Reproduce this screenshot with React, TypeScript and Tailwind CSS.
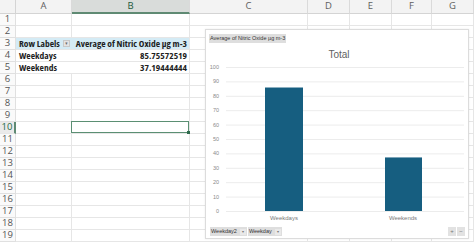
import React from 'react';

const cols = [
  { key: 'A', w: 56 },
  { key: 'B', w: 118 },
  { key: 'C', w: 118 },
  { key: 'D', w: 42 },
  { key: 'E', w: 42 },
  { key: 'F', w: 40 },
  { key: 'G', w: 42 },
];

const rows = Array.from({ length: 19 }, (_, i) => i + 1);

const cellFont = { fontFamily: '"Open Sans", "DejaVu Sans Condensed", sans-serif' };
const headFont = { fontFamily: '"Open Sans", "Liberation Sans", sans-serif' };

const Cell: React.FC<{ r: number; c: string }> = ({ r, c }) => {
  const base = 'h-[12px] border-r border-b border-[#e6e6e6] text-[9.5px] leading-[12px] text-[#1f1f1f] overflow-visible whitespace-nowrap [font-stretch:84%]';
  if (r === 3 && c === 'A')
    return (
      <div className={`${base} bg-[#d4ebf5] font-bold pl-[3px] flex items-center gap-[3px] border-r-0`}>
        Row Labels
        <span className="w-[7px] h-[7px] bg-[#e3e3e3] border border-[#c8c8c8] flex items-center justify-center text-[5px] leading-none text-[#666]">▾</span>
      </div>
    );
  if (r === 3 && c === 'B')
    return <div className={`${base} bg-[#d4ebf5] font-bold text-right pr-[2px]`}>Average of Nitric Oxide µg m-3</div>;
  if (r === 4 && c === 'A') return <div className={`${base} font-bold pl-[3px] border-r-0`}>Weekdays</div>;
  if (r === 4 && c === 'B') return <div className={`${base} font-bold text-right pr-[2px]`}>85.75572519</div>;
  if (r === 5 && c === 'A') return <div className={`${base} font-bold pl-[3px] border-r-0`}>Weekends</div>;
  if (r === 5 && c === 'B') return <div className={`${base} font-bold text-right pr-[2px]`}>37.19444444</div>;
  if (r === 10 && c === 'B')
    return (
      <div className={`${base} relative`}>
        <div className="absolute -left-[1px] -top-[1px] right-0 bottom-0 border border-[#5b8f73]" />
        <div className="absolute -right-[1px] -bottom-[1px] w-[3px] h-[3px] bg-[#2f6b4d]" />
      </div>
    );
  return <div className={base} />;
};

const Chart: React.FC = () => {
  const ticks = [100, 90, 80, 70, 60, 50, 40, 30, 20, 10, 0];
  const y = (v: number) => 181 - v * 1.44;
  return (
    <div
      className="absolute left-[205px] top-[29px] w-[264px] h-[210px] bg-white border border-[#dcdcdc] shadow-[0_0_2px_rgba(0,0,0,0.08)]"
      style={{ fontFamily: '"Liberation Sans", Arial, sans-serif' }}
    >
      <svg className="absolute left-0 top-0" width={264} height={210}>
        <text x={133} y={28} textAnchor="middle" fontSize={10} fill="#5f5f5f">Total</text>
        {ticks.map(t => (
          <g key={t}>
            <line x1={20} x2={258} y1={y(t) + 0.5} y2={y(t) + 0.5} stroke="#ececec" strokeWidth={1} />
            <text x={13} y={y(t) + 2} textAnchor="end" fontSize={5.5} fill="#8a8a8a">{t}</text>
          </g>
        ))}
        <rect x={59} y={y(85.75572519)} width={38} height={85.75572519 * 1.44} fill="#165e80" />
        <rect x={179} y={y(37.19444444)} width={37} height={37.19444444 * 1.44} fill="#165e80" />
        <text x={78} y={190} textAnchor="middle" fontSize={6} fill="#7a7a7a">Weekdays</text>
        <text x={197} y={190} textAnchor="middle" fontSize={6} fill="#7a7a7a">Weekends</text>
      </svg>
      <div className="absolute left-[3px] top-[4px] h-[9px] px-[1px] bg-[#dedede] text-[5.5px] leading-[9px] text-[#333]">
        Average of Nitric Oxide µg m-3
      </div>
      <div className="absolute left-[4px] top-[197px] flex gap-[1px]">
        {['Weekday2', 'Weekday'].map(l => (
          <div key={l} className="h-[9px] bg-[#dedede] flex items-center gap-[3px] pl-[1px] pr-[1px] text-[5.5px] text-[#333]">
            {l}
            <span className="w-[6px] h-[6px] bg-[#e9e9e9] flex items-center justify-center text-[4px] text-[#777]">▾</span>
          </div>
        ))}
      </div>
      <div className="absolute left-[242px] top-[197px] flex gap-[1px]">
        <div className="w-[8px] h-[9px] bg-[#e2e2e2] flex items-center justify-center text-[6px] text-[#777]">+</div>
        <div className="w-[8px] h-[9px] bg-[#e2e2e2] flex items-center justify-center text-[6px] text-[#777]">−</div>
      </div>
    </div>
  );
};

const App: React.FC = () => {
  return (
    <div className="relative w-[474px] h-[244px] bg-white overflow-hidden">
      <div
        className="grid"
        style={{ gridTemplateColumns: `16px ${cols.map(c => `${c.w}px`).join(' ')}` }}
      >
        <div className="h-[14px] bg-[#f3f3f3] border-b border-r border-[#d4d4d4]" />
        {cols.map(c => (
          <div
            key={c.key}
            className={`h-[14px] flex items-center justify-center text-[9.5px] border-r border-[#dadada] ${
              c.key === 'B'
                ? 'bg-[#d9dcda] text-[#1e5b3c] border-b-2 border-b-[#5f8a73]'
                : 'bg-[#f3f3f3] text-[#606060] border-b border-b-[#d4d4d4]'
            }`}
            style={headFont}
          >
            {c.key}
          </div>
        ))}
        {rows.map(r => (
          <React.Fragment key={r}>
            <div
              className={`h-[12px] flex items-center justify-center text-[9.5px] border-b ${
                r === 10
                  ? 'bg-[#eaeaea] text-[#1e6b45] border-r-2 border-r-[#5f8a73] border-b-[#e6e6e6]'
                  : 'bg-[#fafafa] text-[#555] border-r border-[#e0e0e0]'
              }`}
              style={headFont}
            >
              {r}
            </div>
            {cols.map(c => (
              <div key={c.key} style={cellFont}>
                <Cell r={r} c={c.key} />
              </div>
            ))}
          </React.Fragment>
        ))}
      </div>
      <Chart />
    </div>
  );
};

export default App;
